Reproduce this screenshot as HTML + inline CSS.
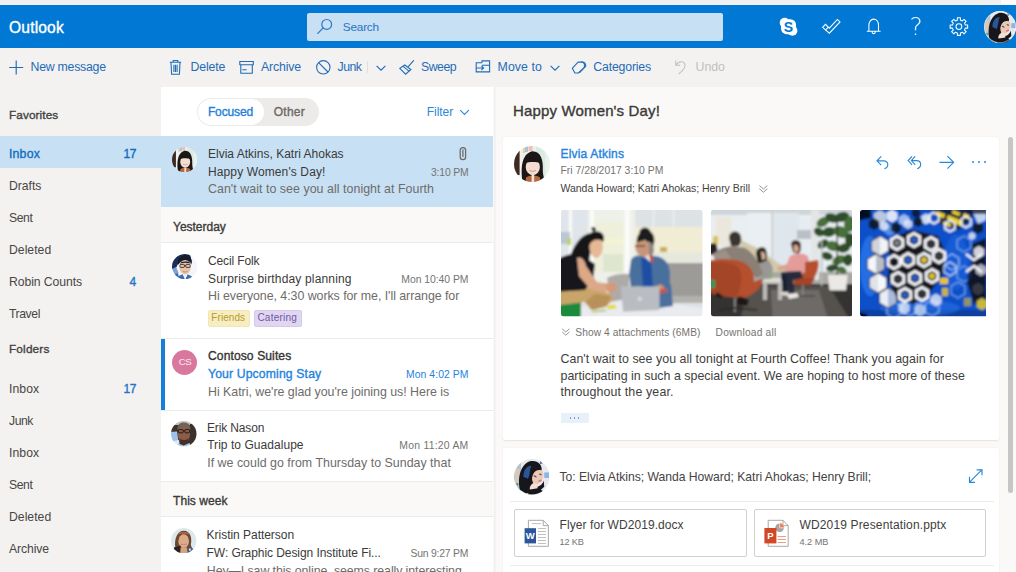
<!DOCTYPE html>
<html lang="en"><head><meta charset="utf-8"><title>Outlook</title>
<style>
html,body{margin:0;padding:0}
body{width:1016px;height:572px;overflow:hidden;position:relative;background:#faf9f8;font-family:'Liberation Sans',sans-serif}
.a{position:absolute;display:block}
.t{position:absolute;white-space:pre;line-height:16px;display:block}
</style></head>
<body>
<div class="a" style="left:0px;top:0px;width:1016px;height:5px;background:#f0f0f0"></div>
<div class="a" style="left:1001px;top:0px;width:15px;height:5px;background:#fbfbfb"></div>
<div class="a" style="left:0px;top:5px;width:1016px;height:42.6px;background:#0078d4"></div>
<span class="t" style="left:9.00px;top:19.50px;font-size:15.6px;-webkit-text-stroke:0.36px;color:#fff;letter-spacing:0.164px;">Outlook</span>
<div class="a" style="left:307px;top:12.5px;width:415.5px;height:28.3px;background:#c7e0f4;border-radius:2px"></div>
<svg class="a" style="left:316px;top:17px" width="18" height="18" viewBox="0 0 18 18"><circle cx="10.7" cy="7.4" r="4.9" fill="none" stroke="#2b78c5" stroke-width="1.2"/><path d="M7.2 10.9 L1.8 16.4" stroke="#2b78c5" stroke-width="1.3" stroke-linecap="round"/></svg>
<span class="t" style="left:342.80px;top:18.70px;font-size:11.8px;color:#2673c3;letter-spacing:-0.215px;">Search</span>
<div class="a" style="left:0px;top:48px;width:1016px;height:38.5px;background:#f3f2f1"></div>
<div class="a" style="left:0px;top:86.5px;width:160.8px;height:486px;background:#f3f2f1"></div>
<div class="a" style="left:160.8px;top:86.5px;width:332.7px;height:486px;background:#fff"></div>
<div class="a" style="left:493.5px;top:86.5px;width:522.5px;height:486px;background:#faf9f8"></div>
<div class="a" style="left:493.5px;top:86.5px;width:2.4px;height:486px;background:linear-gradient(90deg,#efeeec,#f7f6f5)"></div>
<svg class="a" style="left:8px;top:59px" width="17" height="17" viewBox="0 0 17 17"><path d="M8.2 1.5V15.5M1.2 8.5H15.2" stroke="#1f6cb8" stroke-width="1.15" fill="none"/></svg>
<span class="t" style="left:30.60px;top:59.00px;font-size:12.3px;color:#1f6cb8;letter-spacing:-0.247px;">New message</span>
<span class="t" style="left:190.60px;top:59.00px;font-size:12.3px;color:#1f6cb8;letter-spacing:-0.174px;">Delete</span>
<span class="t" style="left:261.00px;top:59.00px;font-size:12.3px;color:#1f6cb8;letter-spacing:-0.145px;">Archive</span>
<span class="t" style="left:337.50px;top:59.00px;font-size:12.3px;color:#1f6cb8;letter-spacing:-0.496px;">Junk</span>
<span class="t" style="left:421.00px;top:59.00px;font-size:12.3px;color:#1f6cb8;letter-spacing:-0.482px;">Sweep</span>
<span class="t" style="left:497.60px;top:59.00px;font-size:12.3px;color:#1f6cb8;letter-spacing:0.079px;">Move to</span>
<span class="t" style="left:593.30px;top:59.00px;font-size:12.3px;color:#1f6cb8;letter-spacing:-0.177px;">Categories</span>
<span class="t" style="left:695.60px;top:59.00px;font-size:12.3px;color:#c2c0be;letter-spacing:-0.027px;">Undo</span>
<div class="a" style="left:367.3px;top:60.5px;width:1px;height:12px;background:#e1dfdd"></div>
<span class="t" style="left:9.00px;top:107.00px;font-size:11.8px;-webkit-text-stroke:0.36px;color:#454341;letter-spacing:0.087px;">Favorites</span>
<div class="a" style="left:0px;top:136.3px;width:160.8px;height:31.9px;background:#c7e0f4"></div>
<span class="t" style="left:9.00px;top:146.00px;font-size:12.3px;-webkit-text-stroke:0.36px;color:#106ebe;letter-spacing:0.181px;">Inbox</span>
<span class="t" style="left:123.40px;top:146.00px;font-size:12px;-webkit-text-stroke:0.36px;color:#106ebe;letter-spacing:-0.380px;">17</span>
<span class="t" style="left:9.00px;top:178.00px;font-size:12.2px;color:#484644;letter-spacing:-0.036px;">Drafts</span>
<span class="t" style="left:9.00px;top:210.00px;font-size:12.2px;color:#484644;letter-spacing:-0.395px;">Sent</span>
<span class="t" style="left:9.00px;top:242.00px;font-size:12.2px;color:#484644;letter-spacing:0.026px;">Deleted</span>
<span class="t" style="left:9.00px;top:274.00px;font-size:12.2px;color:#484644;letter-spacing:-0.072px;">Robin Counts</span>
<span class="t" style="left:9.00px;top:305.80px;font-size:12.2px;color:#484644;letter-spacing:-0.404px;">Travel</span>
<span class="t" style="left:129.40px;top:274.00px;font-size:12px;-webkit-text-stroke:0.36px;color:#2474c8;">4</span>
<span class="t" style="left:9.00px;top:341.30px;font-size:11.8px;-webkit-text-stroke:0.36px;color:#454341;letter-spacing:0.165px;">Folders</span>
<span class="t" style="left:9.00px;top:381.00px;font-size:12.2px;color:#484644;letter-spacing:0.094px;">Inbox</span>
<span class="t" style="left:9.00px;top:412.60px;font-size:12.2px;color:#484644;letter-spacing:-0.438px;">Junk</span>
<span class="t" style="left:9.00px;top:445.00px;font-size:12.2px;color:#484644;letter-spacing:0.094px;">Inbox</span>
<span class="t" style="left:9.00px;top:477.00px;font-size:12.2px;color:#484644;letter-spacing:-0.395px;">Sent</span>
<span class="t" style="left:9.00px;top:509.00px;font-size:12.2px;color:#484644;letter-spacing:0.026px;">Deleted</span>
<span class="t" style="left:9.00px;top:541.00px;font-size:12.2px;color:#484644;letter-spacing:-0.092px;">Archive</span>
<span class="t" style="left:123.40px;top:381.00px;font-size:12px;-webkit-text-stroke:0.36px;color:#2474c8;letter-spacing:-0.380px;">17</span>
<div class="a" style="left:197.3px;top:97.7px;width:121.3px;height:28.2px;background:#edebe9;border-radius:15px"></div>
<div class="a" style="left:198px;top:98.5px;width:66.3px;height:26.6px;background:#fff;border-radius:14px"></div>
<span class="t" style="left:207.90px;top:104.20px;font-size:12px;-webkit-text-stroke:0.36px;color:#1f7fd8;letter-spacing:-0.119px;">Focused</span>
<span class="t" style="left:273.80px;top:104.20px;font-size:12px;-webkit-text-stroke:0.36px;color:#6b6967;letter-spacing:0.237px;">Other</span>
<span class="t" style="left:426.80px;top:104.00px;font-size:12px;color:#2b88d8;letter-spacing:-0.062px;">Filter</span>
<svg class="a" style="left:459px;top:108px" width="11" height="9" viewBox="0 0 11 9"><path d="M1.2 2.2 L5.5 6.4 L9.8 2.2" fill="none" stroke="#2b88d8" stroke-width="1.1"/></svg>
<div class="a" style="left:160.8px;top:136.3px;width:332.7px;height:70.4px;background:#c7e0f4"></div>
<span class="t" style="left:208.00px;top:145.80px;font-size:12px;color:#3b3a39;letter-spacing:0.007px;">Elvia Atkins, Katri Ahokas</span>
<span class="t" style="left:208.00px;top:163.50px;font-size:12px;color:#3b3a39;letter-spacing:0.114px;">Happy Women&#x27;s Day!</span>
<span class="t" style="left:208.00px;top:181.20px;font-size:12.4px;color:#6e6c6a;letter-spacing:0.043px;">Can&#x27;t wait to see you all tonight at Fourth</span>
<span class="t" style="left:431.00px;top:164.70px;font-size:10.4px;color:#757371;letter-spacing:-0.172px;">3:10 PM</span>
<div class="a" style="left:160.8px;top:206.7px;width:332.7px;height:36.2px;background:#faf9f8;border-bottom:1px solid #edebe9;box-sizing:border-box"></div>
<span class="t" style="left:173.00px;top:218.50px;font-size:12px;-webkit-text-stroke:0.36px;color:#3b3a39;letter-spacing:-0.015px;">Yesterday</span>
<span class="t" style="left:208.00px;top:252.60px;font-size:12px;color:#3b3a39;letter-spacing:-0.119px;">Cecil Folk</span>
<span class="t" style="left:208.00px;top:270.70px;font-size:12px;color:#3b3a39;letter-spacing:0.165px;">Surprise birthday planning</span>
<span class="t" style="left:401.30px;top:271.70px;font-size:10.4px;color:#757371;letter-spacing:-0.032px;">Mon 10:40 PM</span>
<span class="t" style="left:208.00px;top:287.80px;font-size:12.4px;color:#6e6c6a;letter-spacing:-0.051px;">Hi everyone, 4:30 works for me, I&#x27;ll arrange for</span>
<div class="a" style="left:207.5px;top:309.6px;width:42.2px;height:17.2px;background:#f7edc4;border:1px solid #f4e6b0;border-radius:2px;box-sizing:border-box"></div>
<span class="t" style="left:211.30px;top:310.30px;font-size:10px;color:#b89c1e;letter-spacing:0.077px;">Friends</span>
<div class="a" style="left:253.8px;top:309.8px;width:48.2px;height:17px;background:#e0d6f0;border:1px solid #d6c9ec;border-radius:2px;box-sizing:border-box"></div>
<span class="t" style="left:257.40px;top:310.30px;font-size:10px;color:#6f55a8;letter-spacing:0.248px;">Catering</span>
<div class="a" style="left:160.8px;top:338px;width:332.7px;height:1px;background:#edebe9"></div>
<div class="a" style="left:160.8px;top:338.6px;width:4.6px;height:71px;background:#1480da"></div>
<div class="a" style="left:172px;top:349.7px;width:25.3px;height:25.3px;background:#d9789f;border-radius:50%"></div>
<span class="t" style="left:178.70px;top:354.40px;font-size:9.7px;color:#fbeaf1;letter-spacing:-0.434px;">CS</span>
<span class="t" style="left:208.00px;top:348.40px;font-size:12.1px;-webkit-text-stroke:0.36px;color:#353433;letter-spacing:0.091px;">Contoso Suites</span>
<span class="t" style="left:208.00px;top:366.30px;font-size:12.2px;-webkit-text-stroke:0.36px;color:#2483dc;letter-spacing:0.147px;">Your Upcoming Stay</span>
<span class="t" style="left:406.00px;top:367.30px;font-size:10.4px;color:#2483dc;letter-spacing:0.064px;">Mon 4:02 PM</span>
<span class="t" style="left:208.00px;top:383.90px;font-size:12.4px;color:#6e6c6a;letter-spacing:-0.024px;">Hi Katri, we&#x27;re glad you&#x27;re joining us! Here is</span>
<div class="a" style="left:160.8px;top:409.5px;width:332.7px;height:1px;background:#edebe9"></div>
<span class="t" style="left:207.00px;top:419.50px;font-size:12px;color:#3b3a39;letter-spacing:-0.149px;">Erik Nason</span>
<span class="t" style="left:207.20px;top:437.30px;font-size:12px;color:#3b3a39;letter-spacing:0.046px;">Trip to Guadalupe</span>
<span class="t" style="left:399.30px;top:438.30px;font-size:10.4px;color:#757371;letter-spacing:0.247px;">Mon 11:20 AM</span>
<span class="t" style="left:207.20px;top:454.60px;font-size:12.4px;color:#6e6c6a;letter-spacing:0.018px;">If we could go from Thursday to Sunday that</span>
<div class="a" style="left:160.8px;top:480.6px;width:332.7px;height:36.7px;background:#faf9f8;border-bottom:1px solid #edebe9;border-top:1px solid #edebe9;box-sizing:border-box"></div>
<span class="t" style="left:173.00px;top:493.00px;font-size:12px;-webkit-text-stroke:0.36px;color:#3b3a39;letter-spacing:0.063px;">This week</span>
<span class="t" style="left:206.60px;top:526.80px;font-size:12px;color:#3b3a39;letter-spacing:-0.032px;">Kristin Patterson</span>
<span class="t" style="left:206.60px;top:544.80px;font-size:12px;color:#3b3a39;letter-spacing:-0.068px;">FW: Graphic Design Institute Fi...</span>
<span class="t" style="left:410.50px;top:545.80px;font-size:10.4px;color:#757371;letter-spacing:-0.216px;">Sun 9:27 PM</span>
<span class="t" style="left:206.80px;top:562.60px;font-size:12.4px;color:#6e6c6a;letter-spacing:-0.101px;">Hey—I saw this online, seems really interesting</span>
<span class="t" style="left:513.10px;top:102.60px;font-size:15px;-webkit-text-stroke:0.36px;color:#3b3a39;letter-spacing:0.144px;">Happy Women&#x27;s Day!</span>
<div class="a" style="left:503.3px;top:136.7px;width:495.7px;height:303px;background:#fff;border-radius:2px;box-shadow:0 0.3px 1.6px rgba(0,0,0,.09)"></div>
<span class="t" style="left:560.50px;top:145.50px;font-size:12px;-webkit-text-stroke:0.36px;color:#2483dc;letter-spacing:0.187px;">Elvia Atkins</span>
<span class="t" style="left:560.50px;top:162.80px;font-size:10.4px;color:#757371;">Fri 7/28/2017 3:10 PM</span>
<span class="t" style="left:560.50px;top:179.50px;font-size:10.5px;color:#454341;letter-spacing:-0.039px;">Wanda Howard; Katri Ahokas; Henry Brill</span>
<span class="t" style="left:575.30px;top:324.50px;font-size:10.2px;color:#757371;letter-spacing:0.101px;">Show 4 attachments (6MB)</span>
<span class="t" style="left:715.60px;top:324.50px;font-size:10.2px;color:#757371;letter-spacing:0.205px;">Download all</span>
<span class="t" style="left:560.50px;top:350.50px;font-size:12.4px;color:#403e3c;letter-spacing:0.046px;">Can&#x27;t wait to see you all tonight at Fourth Coffee! Thank you again for</span>
<span class="t" style="left:560.50px;top:367.80px;font-size:12.4px;color:#403e3c;letter-spacing:0.022px;">participating in such a special event. We are hoping to host more of these</span>
<span class="t" style="left:560.50px;top:384.10px;font-size:12.4px;color:#403e3c;letter-spacing:0.143px;">throughout the year.</span>
<div class="a" style="left:560.6px;top:412.5px;width:28px;height:10.2px;background:#e8f1fa;border-radius:1px"></div>
<div class="a" style="left:569.6px;top:417.2px;width:1.4px;height:1.4px;background:#6d8db0;border-radius:50%"></div>
<div class="a" style="left:573.8px;top:417.2px;width:1.4px;height:1.4px;background:#6d8db0;border-radius:50%"></div>
<div class="a" style="left:578px;top:417.2px;width:1.4px;height:1.4px;background:#6d8db0;border-radius:50%"></div>
<div class="a" style="left:503.3px;top:448px;width:495.7px;height:130px;background:#fff;border-radius:2px;box-shadow:0 0.3px 1.6px rgba(0,0,0,.09)"></div>
<span class="t" style="left:559.50px;top:469.40px;font-size:12.2px;color:#454341;letter-spacing:-0.040px;">To: Elvia Atkins; Wanda Howard; Katri Ahokas; Henry Brill;</span>
<div class="a" style="left:510px;top:501px;width:483.8px;height:1px;background:#edebe9"></div>
<div class="a" style="left:514px;top:508.9px;width:232.8px;height:47.8px;border:1px solid #d2d0ce;border-radius:2px;box-sizing:border-box;background:#fff"></div>
<div class="a" style="left:753.6px;top:508.9px;width:232.3px;height:47.8px;border:1px solid #d2d0ce;border-radius:2px;box-sizing:border-box;background:#fff"></div>
<span class="t" style="left:559.60px;top:516.50px;font-size:12px;color:#403e3c;letter-spacing:0.066px;">Flyer for WD2019.docx</span>
<span class="t" style="left:559.60px;top:533.60px;font-size:9.2px;color:#757371;letter-spacing:-0.166px;">12 KB</span>
<span class="t" style="left:799.50px;top:516.50px;font-size:12px;color:#403e3c;letter-spacing:0.149px;">WD2019 Presentation.pptx</span>
<span class="t" style="left:799.50px;top:533.60px;font-size:9.2px;color:#757371;letter-spacing:-0.035px;">4.2 MB</span>
<div class="a" style="left:510px;top:564.9px;width:483.5px;height:1px;background:#edebe9"></div>
<div class="a" style="left:1008px;top:136.5px;width:5px;height:356px;background:#c8c6c4;border-radius:3px"></div>
<svg class="a" style="left:168px;top:58px" width="16" height="18" viewBox="0 0 16 18" ><g fill="none" stroke="#1f6cb8" stroke-width="1.1"><path d="M1.8 4.3H13.2M5.2 4.1V2.5H9.8V4.1M3 4.5L3.6 16.2H11.4L12 4.5M5.9 6.8V14M7.5 6.8V14M9.1 6.8V14"/></g></svg>
<svg class="a" style="left:238px;top:59px" width="18" height="17" viewBox="0 0 18 17" ><g fill="none" stroke="#1f6cb8" stroke-width="1.1"><path d="M1.8 2.5H15.3V5.8H1.8ZM2.8 5.8V14.2H14.3V5.8M4.3 10.8H8.6" /></g></svg>
<svg class="a" style="left:315px;top:59px" width="17" height="17" viewBox="0 0 17 17" ><g fill="none" stroke="#1f6cb8" stroke-width="1.1"><circle cx="8.3" cy="8.3" r="6.7"/><path d="M3.6 3.6L13 13"/></g></svg>
<svg class="a" style="left:375px;top:63px" width="12" height="10" viewBox="0 0 12 10" ><path d="M1.6 2.8L6 7.2L10.4 2.8" fill="none" stroke="#1f6cb8" stroke-width="1.1"/></svg>
<svg class="a" style="left:548.5px;top:63px" width="12" height="10" viewBox="0 0 12 10" ><path d="M1.6 2.8L6 7.2L10.4 2.8" fill="none" stroke="#1f6cb8" stroke-width="1.1"/></svg>
<svg class="a" style="left:398px;top:58px" width="18" height="18" viewBox="0 0 18 18" ><g fill="none" stroke="#1f6cb8" stroke-width="1.1"><path d="M15.8 2.4L9.8 9.2M6.8 7L12.9 11.5L7.6 16.2L1.8 10.3ZM4.9 8.2L10.9 13.2"/></g></svg>
<svg class="a" style="left:474px;top:58px" width="18" height="16" viewBox="0 0 18 16" ><g fill="none" stroke="#1f6cb8" stroke-width="1.1"><path d="M8 4.8V2.9H15.6V13.9H2.2V4.8H8M8 7.2H15.6M2.2 10H9.6M7.4 7.9L9.6 10L7.4 12.1"/></g></svg>
<svg class="a" style="left:570px;top:59px" width="18" height="16" viewBox="0 0 18 16" ><g fill="none" stroke="#1f6cb8" stroke-width="1.1" stroke-linejoin="round"><path d="M2.3 9.3L8 3.1H12.6L14.4 4.9V8.4L8.4 14H4.9Z"/><path d="M11 3.2Q15.6 2.2 15.8 7.2L9.6 13.6"/></g></svg>
<svg class="a" style="left:674px;top:58px" width="14" height="18" viewBox="0 0 14 18" ><g fill="none" stroke="#c2c0be" stroke-width="1.1"><path d="M1.8 2.6V7.2H6.2M2 7C4 3.6 8.6 2.6 10.6 5.4C12.6 8.6 9 12.6 4.6 16"/></g></svg>
<svg class="a" style="left:778px;top:16px" width="21" height="21" viewBox="0 0 21 21" ><g fill="#fff"><rect x="3" y="3.2" width="15" height="15" rx="5.6"/><circle cx="6.7" cy="6.8" r="5"/><circle cx="14.4" cy="14.8" r="5"/></g><text x="10.5" y="15.6" text-anchor="middle" font-family="Liberation Sans, sans-serif" font-weight="700" font-size="14" fill="#0078d4">S</text></svg>
<svg class="a" style="left:821px;top:17px" width="21" height="18" viewBox="0 0 21 18" ><g fill="none" stroke="#fff" stroke-width="1.05" stroke-linejoin="miter"><path d="M1.6 10.3L4.5 7.3L8.3 11.2L16.4 2.4L19 4.9L8.3 16.2Z"/><path d="M4.5 13.2L7.3 10.2"/></g></svg>
<svg class="a" style="left:865px;top:17px" width="18" height="19" viewBox="0 0 18 19" ><g fill="none" stroke="#fff" stroke-width="1.05"><path d="M3.9 14.3V8.2C3.9 4.6 6 2.1 8.7 2.1C11.4 2.1 13.5 4.6 13.5 8.2V14.3M1.8 14.3H15.6M7 14.5C7 17.3 10.4 17.3 10.4 14.5"/></g></svg>
<span class="a" style="left:909.6px;top:13.4px;font-family:'DejaVu Sans','Liberation Sans',sans-serif;font-weight:200;font-size:25px;line-height:28px;color:#fff;opacity:.92">?</span>
<svg class="a" style="left:948px;top:16px" width="22" height="22" viewBox="0 0 22 22" ><g fill="none" stroke="#fff" stroke-width="1.05" stroke-linejoin="round"><path d="M19.67 9.07L19.67 12.13L17.32 12.14L16.53 14.05L18.18 15.72L16.02 17.88L14.35 16.23L12.44 17.02L12.43 19.37L9.37 19.37L9.36 17.02L7.45 16.23L5.78 17.88L3.62 15.72L5.27 14.05L4.48 12.14L2.13 12.13L2.13 9.07L4.48 9.06L5.27 7.15L3.62 5.48L5.78 3.32L7.45 4.97L9.36 4.18L9.37 1.83L12.43 1.83L12.44 4.18L14.35 4.97L16.02 3.32L18.18 5.48L16.53 7.15L17.32 9.06Z"/><circle cx="10.9" cy="10.6" r="2.9"/></g></svg>
<svg class="a" style="left:458px;top:146px" width="10" height="15" viewBox="0 0 10 15" ><g fill="none" stroke="#6b6967" stroke-width="1.25"><path d="M2.2 9.5V4.2C2.2 0.6 7.6 0.6 7.6 4.2V11C7.6 14.6 2.2 14.6 2.2 11V9.5M4.9 3.6V11"/></g></svg>
<svg class="a" style="left:875px;top:154px" width="16" height="17" viewBox="0 0 16 17" ><g fill="none" stroke="#2b88d8" stroke-width="1.15"><path d="M6.2 2.4L2 6.8L6.2 11.2M2.2 6.8H8.6C13.6 6.8 14.4 13 9.4 14.8"/></g></svg>
<svg class="a" style="left:906px;top:154px" width="18" height="17" viewBox="0 0 18 17" ><g fill="none" stroke="#2b88d8" stroke-width="1.15"><path d="M6 2.4L2.2 6.6L6 10.8M9.2 2.4L5.4 6.6L9.2 10.8M5.6 6.6H10.6C15.6 6.6 16.2 13 11.2 14.8"/></g></svg>
<svg class="a" style="left:938px;top:154px" width="18" height="17" viewBox="0 0 18 17" ><g fill="none" stroke="#2b88d8" stroke-width="1.15"><path d="M1.4 8.3H15.4M9.4 2.2L15.6 8.3L9.4 14.6"/></g></svg>
<div class="a" style="left:972.2px;top:161.4px;width:2px;height:2px;background:#2b88d8;border-radius:50%"></div>
<div class="a" style="left:977.9px;top:161.4px;width:2px;height:2px;background:#2b88d8;border-radius:50%"></div>
<div class="a" style="left:983.5px;top:161.4px;width:2px;height:2px;background:#2b88d8;border-radius:50%"></div>
<svg class="a" style="left:968px;top:468px" width="16" height="16" viewBox="0 0 16 16" ><g fill="none" stroke="#2b88d8" stroke-width="1.15"><path d="M1.6 14.2L13.8 1.9M8.6 1.8H14V7.2M1.5 8.8V14.3H7"/></g></svg>
<svg class="a" style="left:757.6px;top:183.6px" width="11" height="10" viewBox="0 0 11 10" ><g fill="none" stroke="#8a8886" stroke-width="0.9"><path d="M1.4 1.6L5.4 5L9.4 1.6M1.4 4.8L5.4 8.2L9.4 4.8"/></g></svg>
<svg class="a" style="left:560.5px;top:327px" width="10" height="10" viewBox="0 0 10 10" ><g fill="none" stroke="#8a8886" stroke-width="0.9"><path d="M1.2 1.8L4.8 5L8.4 1.8M1.2 5L4.8 8.2L8.4 5"/></g></svg>
<svg class="a" style="left:524px;top:519px" width="26" height="29" viewBox="0 0 26 29" ><path d="M4.4 1.3H19.2L24.4 6.6V27.3H4.4Z" fill="#fff" stroke="#a19f9d" stroke-width="0.9"/><path d="M19.2 1.3V6.6H24.4" fill="none" stroke="#a19f9d" stroke-width="0.9"/>
<g stroke="#b3b0ad" stroke-width="0.8"><path d="M8 4.6H17M14 9.5H22M14 12.5H22M14 15.5H22M14 18.5H22M14 21.5H22M14 24.5H22"/></g>
<rect x="0.6" y="9.2" width="11.4" height="15.2" fill="#2b579a"/><text x="6.3" y="20.4" text-anchor="middle" font-family="Liberation Sans, sans-serif" font-weight="700" font-size="9.5" fill="#fff">W</text></svg>
<svg class="a" style="left:763.5px;top:519px" width="26" height="29" viewBox="0 0 26 29" ><path d="M4.2 1.3H19L24.2 6.6V27.3H4.2Z" fill="#fff" stroke="#a19f9d" stroke-width="0.9"/><path d="M19 1.3V6.6H24.2" fill="none" stroke="#a19f9d" stroke-width="0.9"/>
<circle cx="15.6" cy="8.8" r="4.3" fill="#a6a4a2"/><path d="M15.6 8.8V3.8A5 5 0 0 1 20.6 8.8Z" fill="#e8825f" stroke="#fff" stroke-width="0.6"/>
<g stroke="#e9967a" stroke-width="0.9"><path d="M13.6 17.5H22M13.6 20.5H22M13.6 23.5H22"/></g>
<rect x="0.4" y="9" width="12" height="15.4" fill="#d24726"/><text x="6.4" y="20.3" text-anchor="middle" font-family="Liberation Sans, sans-serif" font-weight="700" font-size="9.5" fill="#fff">P</text></svg>
<svg class="a" style="left:513.5px;top:146.1px" width="36" height="36" viewBox="0 0 36 36"><defs><clipPath id="c1"><circle cx="18.0" cy="18.0" r="18.0"/></clipPath><filter id="f1" x="-10%" y="-10%" width="120%" height="120%"><feGaussianBlur stdDeviation="0.5"/></filter></defs><g clip-path="url(#c1)"><g filter="url(#f1)"><rect x="-2" y="-2" width="40" height="40" fill="#eaf1ec"/>
<rect x="22" y="-2" width="9" height="40" fill="#dcebe2"/>
<rect x="8" y="-2" width="3" height="9" fill="#e8d48a"/><rect x="11" y="-2" width="3" height="8" fill="#a9bfe4"/><rect x="14.5" y="-2" width="4" height="7" fill="#f2bdb4"/>
<rect x="-2" y="3" width="8.5" height="26" fill="#3c2a22"/><rect x="5.6" y="2" width="3.2" height="30" fill="#f4f1ec"/>
<path d="M8.6 36C6.6 22 7.6 8.5 17.4 5.4C26.6 4.6 29.4 14 28.8 24C28.7 28 29.8 31 30.6 34L30 38H8Z" fill="#1b1615"/>
<ellipse cx="18.8" cy="21" rx="7.1" ry="8.3" fill="#f3ddd0"/>
<path d="M10.6 17.4C11 10 26 9 26.6 17.2C22 15.6 15 15.8 10.6 17.4Z" fill="#1b1615"/>
<path d="M15.4 24.4Q18.8 26.6 22 24.4" stroke="#c98e80" stroke-width="0.9" fill="none"/>
<path d="M12 31.5C15 28.8 23 28.8 26 31.5L27 38H11Z" fill="#b4673c"/>
<rect x="17.6" y="29" width="2.6" height="8" fill="#f0e4da"/></g></g></svg>
<svg class="a" style="left:171.7px;top:147.1px" width="25.3" height="25.3" viewBox="0 0 36 36"><defs><clipPath id="c2"><circle cx="18.0" cy="18.0" r="18.0"/></clipPath><filter id="f2" x="-10%" y="-10%" width="120%" height="120%"><feGaussianBlur stdDeviation="0.7"/></filter></defs><g clip-path="url(#c2)"><g filter="url(#f2)"><rect x="-2" y="-2" width="40" height="40" fill="#eaf1ec"/>
<rect x="22" y="-2" width="9" height="40" fill="#dcebe2"/>
<rect x="8" y="-2" width="3" height="9" fill="#e8d48a"/><rect x="11" y="-2" width="3" height="8" fill="#a9bfe4"/><rect x="14.5" y="-2" width="4" height="7" fill="#f2bdb4"/>
<rect x="-2" y="3" width="8.5" height="26" fill="#3c2a22"/><rect x="5.6" y="2" width="3.2" height="30" fill="#f4f1ec"/>
<path d="M8.6 36C6.6 22 7.6 8.5 17.4 5.4C26.6 4.6 29.4 14 28.8 24C28.7 28 29.8 31 30.6 34L30 38H8Z" fill="#1b1615"/>
<ellipse cx="18.8" cy="21" rx="7.1" ry="8.3" fill="#f3ddd0"/>
<path d="M10.6 17.4C11 10 26 9 26.6 17.2C22 15.6 15 15.8 10.6 17.4Z" fill="#1b1615"/>
<path d="M15.4 24.4Q18.8 26.6 22 24.4" stroke="#c98e80" stroke-width="0.9" fill="none"/>
<path d="M12 31.5C15 28.8 23 28.8 26 31.5L27 38H11Z" fill="#b4673c"/>
<rect x="17.6" y="29" width="2.6" height="8" fill="#f0e4da"/></g></g></svg>
<svg class="a" style="left:171.7px;top:253.8px" width="25.3" height="25.3" viewBox="0 0 25.3 25.3"><defs><clipPath id="c3"><circle cx="12.65" cy="12.65" r="12.65"/></clipPath><filter id="f3" x="-10%" y="-10%" width="120%" height="120%"><feGaussianBlur stdDeviation="0.5"/></filter></defs><g clip-path="url(#c3)"><g filter="url(#f3)"><rect x="-2" y="-2" width="30" height="30" fill="#f4f6fa"/>
<path d="M-2 14C0 4 8 -2 18 0L20 9L12 4L6 10L3 16Z" fill="#1d2f57"/>
<path d="M0 15L4 13L6.6 19L3 21Z" fill="#7ea0d8"/><path d="M2 21L6 19L7 24L4 25Z" fill="#3d68b0"/>
<path d="M6 11C5 3.4 10 0.8 13.8 1C18.6 1.2 20.6 5.4 19.4 10.8L18 7.8L8.4 7.8Z" fill="#151c2e"/>
<ellipse cx="13.1" cy="13.2" rx="5.7" ry="7.3" fill="#e9c4a6"/>
<path d="M7.4 9.6C9 7 17 6.8 18.8 9.4C15 8.4 11 8.4 7.4 9.6Z" fill="#151c2e"/>
<g fill="none" stroke="#2e2a2e" stroke-width="0.9"><rect x="8" y="10.4" width="4.4" height="3" rx="0.8"/><rect x="13.8" y="10.4" width="4.4" height="3" rx="0.8"/><path d="M12.4 11.6H13.8"/></g>
<path d="M10.8 17.4Q13.1 18.8 15.4 17.4" stroke="#b5756a" stroke-width="0.7" fill="none"/>
<path d="M5 27L7 21.8L10.8 20.2L13.1 24.4L15.6 20.2L20 22.6L21.4 27Z" fill="#3b6cb4"/>
<path d="M10.8 20.2L13.1 26L15.6 20.2L13.1 21.6Z" fill="#f4f6fa"/></g></g></svg>
<svg class="a" style="left:171.2px;top:421.4px" width="25.5" height="25.5" viewBox="0 0 25.5 25.5"><defs><clipPath id="c4"><circle cx="12.75" cy="12.75" r="12.75"/></clipPath><filter id="f4" x="-10%" y="-10%" width="120%" height="120%"><feGaussianBlur stdDeviation="0.6"/></filter></defs><g clip-path="url(#c4)"><g filter="url(#f4)"><rect x="-2" y="-2" width="30" height="30" fill="#40302a"/>
<rect x="3" y="-2" width="18" height="6" fill="#c9bdb0"/>
<rect x="19" y="3" width="9" height="22" fill="#3a302e"/>
<path d="M-2 11L6 10.4L7.6 21L-2 22Z" fill="#9fc2ea"/>
<path d="M-2 21L8 19L9 27H-2Z" fill="#dfe9f4"/>
<path d="M6.4 9C6 3.4 10 1.6 13 1.6C17.6 1.8 19.6 4.4 19.4 9L13 6.4Z" fill="#6b635e"/>
<ellipse cx="12.9" cy="12.8" rx="6.2" ry="7.9" fill="#8b5d46"/>
<g fill="none" stroke="#241c1a" stroke-width="1"><rect x="7.4" y="8.6" width="4.8" height="3.2" rx="0.9"/><rect x="13.8" y="8.6" width="4.8" height="3.2" rx="0.9"/><path d="M12.2 9.8H13.8"/></g>
<path d="M9 17.4Q13 20.4 17 17.4L16 21.4H10Z" fill="#4a2e26"/>
<path d="M5 27L7 22.4L12.8 24.4L18.4 22L21 27Z" fill="#b4cbe4"/></g></g></svg>
<svg class="a" style="left:171.4px;top:527.7px" width="25.4" height="25.4" viewBox="0 0 25.4 25.4"><defs><clipPath id="c5"><circle cx="12.7" cy="12.7" r="12.7"/></clipPath><filter id="f5" x="-10%" y="-10%" width="120%" height="120%"><feGaussianBlur stdDeviation="0.6"/></filter></defs><g clip-path="url(#c5)"><g filter="url(#f5)"><rect x="-2" y="-2" width="30" height="30" fill="#dde8ec"/>
<path d="M4.4 20C2.8 10 7 2.6 13 2.8C18.8 3 21.6 9 19.8 17L21.6 21.6L17 23H6Z" fill="#6e4630"/>
<path d="M6.6 6.4C9 3.4 16.6 3.2 18.8 6.6C15 5.4 10 5.4 6.6 6.4Z" fill="#a86a4a"/>
<ellipse cx="12.7" cy="13.2" rx="5.3" ry="6.9" fill="#dcaa86"/>
<path d="M10 16.2Q12.8 18.6 15.6 16.2Q12.8 17.2 10 16.2Z" fill="#fff" stroke="#b86a5a" stroke-width="0.5"/>
<path d="M2 27L3 19.6L9.6 17.6L10.6 27Z" fill="#2a2420"/>
<path d="M9.6 19.6H16L17.4 27H9Z" fill="#d7a27e"/>
<path d="M16 19L22 20.6L23 27H16.6Z" fill="#4c5d7e"/><rect x="18" y="20.6" width="1.8" height="2" fill="#e8ecf2"/><rect x="20.4" y="23" width="1.8" height="2" fill="#c9463c"/></g></g></svg>
<svg class="a" style="left:513.5px;top:459px" width="35.6" height="35.6" viewBox="0 0 36 36"><defs><clipPath id="c6"><circle cx="18.0" cy="18.0" r="18.0"/></clipPath><filter id="f6" x="-10%" y="-10%" width="120%" height="120%"><feGaussianBlur stdDeviation="0.5"/></filter></defs><g clip-path="url(#c6)"><g filter="url(#f6)"><rect x="-2" y="-2" width="40" height="40" fill="#e6eaee"/>
<rect x="-2" y="-2" width="9" height="40" fill="#b4c2d0"/>
<rect x="1" y="10" width="5" height="14" fill="#d9c8bc"/>
<rect x="30.6" y="13.6" width="5" height="5.6" fill="#8db4e4"/>
<path d="M26.4 1.6L29 4.4L26 5.6Z" fill="#5a6ea8"/>
<circle cx="3.4" cy="25.6" r="1" fill="#2a9a4a"/>
<path d="M6 31C3.6 20 6 6 16 2.4C24 0.6 28.6 6 28 11.4L22 14L19 24L24 28C27 27 29 25 30 22L30.6 28L25 33L12 35Z" fill="#15171d"/>
<path d="M9.4 18C9.6 11 13 6.6 17.6 6.8C15.6 11 16.6 15 14.2 20Z" fill="#2a5596"/>
<ellipse cx="24" cy="18" rx="5.3" ry="7.9" transform="rotate(22 24 18)" fill="#efc8b2"/>
<path d="M19 11C21 8.4 25.4 8 27.6 11.4C24.6 10.6 21.6 11.4 19.6 13.6Z" fill="#15171d"/>
<ellipse cx="21.4" cy="17.6" rx="1.7" ry="0.8" transform="rotate(28 21.4 17.6)" fill="#3c5a92"/>
<ellipse cx="26.6" cy="15.6" rx="1.5" ry="0.7" transform="rotate(20 26.6 15.6)" fill="#3c5a92"/>
<ellipse cx="26.4" cy="22" rx="1.9" ry="1" transform="rotate(-18 26.4 22)" fill="#e17a92"/>
<path d="M16 31C15.6 27 18.6 23.6 21.6 24.4C24 25 24.4 28.6 23.4 32Z" fill="#f5dfd0"/>
<path d="M14 38L15 31L24 29.6L29 32L30 38Z" fill="#15161a"/></g></g></svg>
<svg class="a" style="left:984.3px;top:10.7px" width="32.2" height="32.2" viewBox="0 0 36 36"><defs><clipPath id="c7"><circle cx="18.0" cy="18.0" r="18.0"/></clipPath><filter id="f7" x="-10%" y="-10%" width="120%" height="120%"><feGaussianBlur stdDeviation="0.6"/></filter></defs><g clip-path="url(#c7)"><g filter="url(#f7)"><rect x="-2" y="-2" width="40" height="40" fill="#e6eaee"/>
<rect x="-2" y="-2" width="9" height="40" fill="#b4c2d0"/>
<rect x="1" y="10" width="5" height="14" fill="#d9c8bc"/>
<rect x="30.6" y="13.6" width="5" height="5.6" fill="#8db4e4"/>
<path d="M26.4 1.6L29 4.4L26 5.6Z" fill="#5a6ea8"/>
<circle cx="3.4" cy="25.6" r="1" fill="#2a9a4a"/>
<path d="M6 31C3.6 20 6 6 16 2.4C24 0.6 28.6 6 28 11.4L22 14L19 24L24 28C27 27 29 25 30 22L30.6 28L25 33L12 35Z" fill="#15171d"/>
<path d="M9.4 18C9.6 11 13 6.6 17.6 6.8C15.6 11 16.6 15 14.2 20Z" fill="#2a5596"/>
<ellipse cx="24" cy="18" rx="5.3" ry="7.9" transform="rotate(22 24 18)" fill="#efc8b2"/>
<path d="M19 11C21 8.4 25.4 8 27.6 11.4C24.6 10.6 21.6 11.4 19.6 13.6Z" fill="#15171d"/>
<ellipse cx="21.4" cy="17.6" rx="1.7" ry="0.8" transform="rotate(28 21.4 17.6)" fill="#3c5a92"/>
<ellipse cx="26.6" cy="15.6" rx="1.5" ry="0.7" transform="rotate(20 26.6 15.6)" fill="#3c5a92"/>
<ellipse cx="26.4" cy="22" rx="1.9" ry="1" transform="rotate(-18 26.4 22)" fill="#e17a92"/>
<path d="M16 31C15.6 27 18.6 23.6 21.6 24.4C24 25 24.4 28.6 23.4 32Z" fill="#f5dfd0"/>
<path d="M14 38L15 31L24 29.6L29 32L30 38Z" fill="#15161a"/></g></g></svg>
<div class="a" style="left:984.3px;top:10.7px;width:32.2px;height:32.2px;border-radius:50%;box-shadow:0 0 0 0.7px rgba(255,255,255,.55) inset"></div>
<svg class="a" style="left:561.3px;top:210.3px" width="141.5" height="106.3" viewBox="0 0 141.5 106.3"><defs><clipPath id="c8"><rect x="0" y="0" width="141.5" height="106.3" rx="2.5"/></clipPath><filter id="f8" x="-8%" y="-10%" width="116%" height="120%"><feGaussianBlur stdDeviation="0.95"/></filter></defs><g clip-path="url(#c8)"><g filter="url(#f8)"><rect x="-9" y="-9" width="162" height="127" fill="#eef0ea"/>
<rect x="-9" y="-9" width="36" height="66" fill="#dfe5ea"/>
<rect x="8" y="-6" width="3" height="56" fill="#fbfbf9"/><rect x="29" y="-6" width="4" height="66" fill="#fbfbf9"/>
<rect x="-6" y="22" width="15" height="12" fill="#b9c6d6"/>
<rect x="33" y="12" width="30" height="50" fill="#eef0dc"/>
<rect x="40" y="28" width="22" height="6" fill="#f4f3d4"/><rect x="42" y="44" width="20" height="18" fill="#dfe6cf"/>
<rect x="63.5" y="-6" width="5.5" height="72" fill="#fafaf8"/>
<rect x="74" y="-9" width="80" height="27" fill="#dde2e5"/>
<rect x="74" y="17" width="80" height="37" fill="#f1ecd4"/>
<rect x="92" y="-6" width="1" height="23" fill="#f6f6f4"/><rect x="112" y="-6" width="1" height="23" fill="#f6f6f4"/>
<rect x="99" y="37" width="7" height="6" fill="#c9b04a"/>
<rect x="74" y="42" width="80" height="12" fill="#e6e8de"/>
<rect x="6" y="28" width="4" height="7" fill="#b9d35a"/>
<path d="M46 68Q56 63 68 64V92H50Z" fill="#aeaba7"/>
<path d="M106 53H152V100H108Z" fill="#9d9b98"/>
<path d="M110 86H152V99L112 96Z" fill="#b3b1ae"/>
<path d="M-9 93H152V116H-9Z" fill="#dfe2e5"/>
<path d="M14 98L60 90L100 92L152 100V116H14Z" fill="#e9ebee"/>
<path d="M-8 92H20V116H-8Z" fill="#1a8a3c"/>
<path d="M-8 80C8 76 28 76 36 80C46 82 52 84 52 90L44 97L30 100L24 92L-8 96Z" fill="#c9a56a"/>
<path d="M24 92L34 84L50 86L46 96L32 100Z" fill="#b8915a"/>
<path d="M8 60C6 46 16 28 26 24L34 22L40 26L36 34L30 40L26 62L14 70Z" fill="#191615"/>
<path d="M-8 52C4 44 14 42 22 46L34 54L32 70L24 80L-8 82Z" fill="#17171a"/>
<path d="M28 32C30 28 38 28 41 32C43 38 41 46 36 48C31 48 28 42 28 32Z" fill="#e6b896"/>
<path d="M25 34C24 24 32 19 39 22C43 24 44 28 42 32C38 28 32 29 29 34L27 40Z" fill="#191615"/>
<path d="M30 18C32 16 35 17 35 20L32 22Z" fill="#191615"/>
<path d="M16 48C20 46 24 50 25 56L36 72L50 74L52 80L44 82L30 80L18 66Z" fill="#dca888"/>
<path d="M44 74L54 72L56 80L48 84Z" fill="#d39a7c"/>
<path d="M76 34C74 24 82 19 88 21C94 23 95 32 91 38L84 30Z" fill="#1c1a1c"/>
<circle cx="84" cy="23" r="5.6" fill="#1c1a1c"/>
<path d="M74 36C75 31 82 30 88 32C91 38 90 44 86 47C80 48 75 44 74 36Z" fill="#c99578"/>
<path d="M74 36H84" stroke="#2a2426" stroke-width="1"/>
<path d="M88 32C92 32 94 38 92 44L88 46Z" fill="#8a8684"/>
<path d="M70 50C72 45 80 44 84 48L92 46C102 46 108 52 109 62L109 78L98 82L70 80L68 64Z" fill="#4a6f9c"/>
<path d="M80 48L90 47L92 78H82Z" fill="#1d4fa4"/>
<path d="M84 47L88 44L91 47L89 52Z" fill="#e8e4e2"/><path d="M88 44L92 45L92 52L90 54Z" fill="#c4463a"/>
<path d="M96 76L110 74L112 96L98 98Z" fill="#4c6f9e"/>
<path d="M68 78L78 76L80 82L70 84Z" fill="#c99578"/><path d="M90 78L100 74L104 78L94 84Z" fill="#c99578"/>
<path d="M96 80L106 78L106 82L98 84Z" fill="#c8563e"/>
<path d="M60 76.5H98.5V100L62 101.7Z" fill="#b9bdc2"/>
<rect x="77" y="87" width="3.6" height="3.6" fill="#d9dcdf"/>
<path d="M45.5 95.5L54 94.5L55.5 98.5L47 99.6Z" fill="#e6d944"/>
<path d="M30 101L44 99.6L46 101L32 102.6Z" fill="#a9c95c"/></g></g></svg>
<svg class="a" style="left:710.8px;top:210.3px" width="141.5" height="106.3" viewBox="0 0 141.5 106.3"><defs><clipPath id="c9"><rect x="0" y="0" width="141.5" height="106.3" rx="2.5"/></clipPath><filter id="f9" x="-8%" y="-10%" width="116%" height="120%"><feGaussianBlur stdDeviation="0.95"/></filter></defs><g clip-path="url(#c9)"><g filter="url(#f9)"><rect x="-9" y="-9" width="162" height="127" fill="#e9eef1"/>
<rect x="-9" y="-9" width="162" height="14" fill="#cfd6da"/>
<rect x="36" y="3" width="26" height="57" fill="#e9eff3"/><rect x="62" y="3" width="26" height="57" fill="#dfe7ec"/>
<rect x="88" y="8" width="22" height="55" fill="#e6ecf2"/>
<rect x="60.5" y="0" width="1.6" height="62" fill="#c9cbc8"/>
<rect x="86" y="20" width="18" height="9" fill="#b9c0c6"/>
<rect x="4.6" y="7" width="15.6" height="29" fill="#ebe7dc"/><rect x="2" y="26" width="5" height="8" fill="#d9c24e"/>
<path d="M30 30L46 38L80 62H52L30 42Z" fill="#d2c9ac"/>
<rect x="-9" y="72" width="162" height="46" fill="#353331"/>
<path d="M36 76H118L144 118H28Z" fill="#54514e"/>
<path d="M60 80H108L120 118H62Z" fill="#6d6a67"/>
<rect x="-9" y="62" width="162" height="12" fill="#a9a8a6"/>
<rect x="100" y="0" width="8" height="70" fill="#e4e6e6"/>
<ellipse cx="112" cy="12" rx="7" ry="4.5" transform="rotate(-30 112 12)" fill="#466f3a"/><ellipse cx="121" cy="8" rx="7" ry="4.5" transform="rotate(20 121 8)" fill="#2f4d2c"/><ellipse cx="131" cy="7" rx="7.5" ry="5" transform="rotate(-15 131 7)" fill="#2f4d2c"/><ellipse cx="139" cy="14" rx="6" ry="8" transform="rotate(10 139 14)" fill="#466f3a"/><ellipse cx="108" cy="22" rx="5.5" ry="4" transform="rotate(30 108 22)" fill="#2f4d2c"/><ellipse cx="118" cy="22" rx="7" ry="5" transform="rotate(-10 118 22)" fill="#2f4d2c"/><ellipse cx="130" cy="22" rx="8" ry="5.5" transform="rotate(25 130 22)" fill="#466f3a"/><ellipse cx="139" cy="30" rx="5" ry="7" transform="rotate(0 139 30)" fill="#2f4d2c"/><ellipse cx="112" cy="34" rx="6" ry="4" transform="rotate(-35 112 34)" fill="#2f4d2c"/><ellipse cx="122" cy="36" rx="7" ry="5" transform="rotate(15 122 36)" fill="#466f3a"/><ellipse cx="133" cy="38" rx="6.5" ry="4.5" transform="rotate(-20 133 38)" fill="#2f4d2c"/><ellipse cx="116" cy="46" rx="6" ry="4" transform="rotate(20 116 46)" fill="#2f4d2c"/><ellipse cx="128" cy="50" rx="7" ry="4.5" transform="rotate(-25 128 50)" fill="#466f3a"/><ellipse cx="137" cy="50" rx="5" ry="6" transform="rotate(10 137 50)" fill="#2f4d2c"/><ellipse cx="121" cy="58" rx="6" ry="3.6" transform="rotate(-10 121 58)" fill="#2f4d2c"/><ellipse cx="131" cy="60" rx="5" ry="3.4" transform="rotate(30 131 60)" fill="#466f3a"/>
<rect x="125.6" y="8" width="1.4" height="58" fill="#3a3226"/>
<path d="M117 65H136.6L135 81H118.6Z" fill="#ebe9e5"/>
<path d="M118 81H135" stroke="#2a2826" stroke-width="1"/>
<rect x="110" y="30" width="1.4" height="46" fill="#b9b9b7"/>
<path d="M52 68H71V90H67V74H56V90H52Z" fill="#bdbbb9"/>
<path d="M52 68H71V72H52Z" fill="#dedcda"/>
<path d="M53.4 60L56 58L59 60L62 62L61 69H54Z" fill="#7cc832"/>
<path d="M45 44C45 38 50 36 54 38C57 42 56 50 55 56L48 58Z" fill="#2a2624"/>
<path d="M50 42C53 41 55 44 54 49L51 50Z" fill="#d9b298"/>
<path d="M46 54L58 50L62 58L60 68L50 70Z" fill="#9a9896"/>
<path d="M-6 36C0 33 5 32 6 36L7 44L-6 46Z" fill="#262220"/>
<path d="M18 28C18 22 24 20 28 23C31 26 31 32 28 36L20 36Z" fill="#3b3430"/>
<path d="M2 44C8 38 18 36 24 36L34 38C42 42 48 52 52 64L46 68L34 58L6 56Z" fill="#8b8076"/>
<path d="M2 44L14 40L26 56L6 56Z" fill="#9c9288"/>
<path d="M-8 52C6 48 22 48 32 52C40 56 44 64 43 72C46 70 50 68 52 70C50 78 42 86 32 88L8 86L-8 80Z" fill="#b5502f"/>
<path d="M-8 54C8 50 22 52 28 58C32 66 30 78 26 86L8 86L-8 80Z" fill="#a34527"/>
<rect x="23" y="88" width="1.8" height="14" fill="#8a8886"/><path d="M8 100L24 98L46 100" stroke="#2a2826" stroke-width="1.6" fill="none"/>
<path d="M6 82L12 86L10 88L4 86Z" fill="#1e1c1b"/><path d="M28 86L38 90L36 96L26 94Z" fill="#1a1818"/>
<path d="M-6 70H4V78H-6Z" fill="#2a9a5a"/>
<path d="M80 34C80 30 86 29 89 32C91 36 90 42 87 44L82 42Z" fill="#3a2c26"/>
<path d="M83 35C86 34 88 36 88 40L85 43L82.6 40Z" fill="#d8a58c"/>
<path d="M78 48C80 43 92 42 97 46L100 62L94 64L78 62L72 60L76 54Z" fill="#e39c9a"/>
<path d="M66 57L76 54L78 58L68 61Z" fill="#d8a58c"/>
<path d="M94 52L107 50C109 56 106 66 100 72L84 74L82 70L94 62Z" fill="#b5502f"/>
<path d="M82 68H104L100 75H84Z" fill="#a34527"/>
<rect x="91" y="75" width="1.6" height="10" fill="#8a8886"/><path d="M80 86H104" stroke="#4a4846" stroke-width="1.4"/>
<path d="M70 62L90 61L92 68L82 70L84 84L78 84L76 72L70 70Z" fill="#262c3c"/>
<path d="M70 64L76 66L77 82L72 82Z" fill="#1e2432"/>
<path d="M76 84L86 83L88 87L78 89Z" fill="#ece8e4"/><path d="M70 82L77 82L77 86L70 85Z" fill="#dcd8d4"/></g></g></svg>
<svg class="a" style="left:860px;top:210.3px" width="125.7" height="106.3" viewBox="0 0 125.7 106.3"><defs><clipPath id="c10"><rect x="0" y="0" width="140" height="106.3" rx="2.5"/></clipPath><filter id="f10" x="-8%" y="-10%" width="116%" height="120%"><feGaussianBlur stdDeviation="0.8"/></filter></defs><g clip-path="url(#c10)"><g filter="url(#f10)"><rect x="-9" y="-9" width="152" height="127" fill="#0b4fc8"/><rect x="-9" y="100" width="152" height="18" fill="#0a3f9f"/><path d="M-8 -8H11V8L-8 12Z" fill="#050d22"/><path d="M-8 101L7 104V118H-8Z" fill="#050d22"/><ellipse cx="10" cy="56" rx="10" ry="30" fill="#2f7cf0" opacity=".7"/><ellipse cx="96" cy="52" rx="12" ry="28" fill="#1c62dc" opacity=".6"/><ellipse cx="60" cy="98" rx="40" ry="8" fill="#2f7cf0" opacity=".45"/><path d="M98.9 56.0L92.0 60.0L85.1 56.0L85.1 48.0L92.0 44.0L98.9 48.0Z" fill="none" stroke="#8db8f6" stroke-width="1.8" opacity="0.8"/><path d="M110.9 68.0L104.0 72.0L97.1 68.0L97.1 60.0L104.0 56.0L110.9 60.0Z" fill="none" stroke="#8db8f6" stroke-width="1.8" opacity="0.6"/><path d="M104.9 84.0L98.0 88.0L91.1 84.0L91.1 76.0L98.0 72.0L104.9 76.0Z" fill="none" stroke="#8db8f6" stroke-width="1.8" opacity="0.6"/><path d="M78.9 102.0L72.0 106.0L65.1 102.0L65.1 94.0L72.0 90.0L78.9 94.0Z" fill="none" stroke="#8db8f6" stroke-width="1.8" opacity="0.7"/><path d="M40.9 104.0L34.0 108.0L27.1 104.0L27.1 96.0L34.0 92.0L40.9 96.0Z" fill="none" stroke="#8db8f6" stroke-width="1.8" opacity="0.7"/><path d="M110.9 38.0L104.0 42.0L97.1 38.0L97.1 30.0L104.0 26.0L110.9 30.0Z" fill="none" stroke="#8db8f6" stroke-width="1.8" opacity="0.6"/><path d="M56.9 102.0L50.0 106.0L43.1 102.0L43.1 94.0L50.0 90.0L56.9 94.0Z" fill="none" stroke="#8db8f6" stroke-width="1.8" opacity="0.7"/><path d="M26.1 10.5L20.0 14.0L13.9 10.5L13.9 3.5L20.0 0.0L26.1 3.5Z" fill="#c9d3e2" opacity=".92"/><path d="M37.6 9.2L32.0 12.5L26.4 9.2L26.4 2.7L32.0 -0.5L37.6 2.7Z" fill="#eef2f8" opacity=".92"/><path d="M49.2 13.0L44.0 16.0L38.8 13.0L38.8 7.0L44.0 4.0L49.2 7.0Z" fill="#a9c4f0" opacity=".92"/><path d="M35.2 23.0L30.0 26.0L24.8 23.0L24.8 17.0L30.0 14.0L35.2 17.0Z" fill="#5a92e8" opacity=".92"/><path d="M70.8 11.8L66.0 14.5L61.2 11.8L61.2 6.2L66.0 3.5L70.8 6.2Z" fill="#dfe8f6" opacity=".92"/><path d="M60.3 5.5L56.0 8.0L51.7 5.5L51.7 0.5L56.0 -2.0L60.3 0.5Z" fill="#0a1a3a" opacity=".92"/><path d="M19.2 17.0L14.0 20.0L8.8 17.0L8.8 11.0L14.0 8.0L19.2 11.0Z" fill="#101216" opacity=".85"/><path d="M28.3 18.5L24.0 21.0L19.7 18.5L19.7 13.5L24.0 11.0L28.3 13.5Z" fill="#e9eef6" opacity=".85"/><path d="M40.8 20.8L36.0 23.5L31.2 20.8L31.2 15.2L36.0 12.5L40.8 15.2Z" fill="#101216" opacity=".85"/><path d="M52.3 16.5L48.0 19.0L43.7 16.5L43.7 11.5L48.0 9.0L52.3 11.5Z" fill="#dfe8f6" opacity=".85"/><path d="M62.3 14.5L58.0 17.0L53.7 14.5L53.7 9.5L58.0 7.0L62.3 9.5Z" fill="#101216" opacity=".85"/><path d="M123.2 21.0L118.0 24.0L112.8 21.0L112.8 15.0L118.0 12.0L123.2 15.0Z" fill="#101216" opacity=".85"/><path d="M115.5 28.0L112.0 30.0L108.5 28.0L108.5 24.0L112.0 22.0L115.5 24.0Z" fill="#dfe8f6" opacity=".85"/><path d="M29.0 41.2L20.0 46.4L11.0 41.2L11.0 30.8L20.0 25.6L29.0 30.8Z" fill="#15171c"/><path d="M28.1 40.7L20.0 45.4L11.9 40.7L11.9 31.3L20.0 26.6L28.1 31.3Z" fill="#cfd3da"/><path d="M20 26.6L28.1 31.3V40.7L20 45.4Z" fill="#f1f3f6"/><path d="M25.0 59.2L16.0 64.4L7.0 59.2L7.0 48.8L16.0 43.6L25.0 48.8Z" fill="#15171c"/><path d="M24.1 58.7L16.0 63.4L7.9 58.7L7.9 49.3L16.0 44.6L24.1 49.3Z" fill="#f4f6f9"/><path d="M16 44.6L24.1 49.3V58.7L16 63.4Z" fill="#b9bdc6"/><path d="M27.0 78.2L18.0 83.4L9.0 78.2L9.0 67.8L18.0 62.6L27.0 67.8Z" fill="#15171c"/><path d="M26.1 77.7L18.0 82.4L9.9 77.7L9.9 68.3L18.0 63.6L26.1 68.3Z" fill="#dfe3ea"/><path d="M18 63.6L26.1 68.3V77.7L18 82.4Z" fill="#f6f7fa"/><path d="M37.0 93.2L28.0 98.4L19.0 93.2L19.0 82.8L28.0 77.6L37.0 82.8Z" fill="#15171c"/><path d="M36.1 92.7L28.0 97.4L19.9 92.7L19.9 83.3L28.0 78.6L36.1 83.3Z" fill="#e9eef6"/><path d="M28 78.6L36.1 83.3V92.7L28 97.4Z" fill="#a9bbd8"/><path d="M30 28L52 20L78 26L86 44L82 66L70 82L54 94L38 90L28 70Z" fill="#14161b"/><path d="M44.2 37.1L37.0 41.3L29.8 37.1L29.8 28.8L37.0 24.7L44.2 28.8Z" fill="#f6f8fb"/><path d="M41.3 35.5L37.0 38.0L32.7 35.5L32.7 30.5L37.0 28.0L41.3 30.5Z" fill="#14161b"/><path d="M39.8 34.6L37.0 36.2L34.2 34.6L34.2 31.4L37.0 29.8L39.8 31.4Z" fill="#7c8088"/><path d="M61.2 34.1L54.0 38.3L46.8 34.1L46.8 25.8L54.0 21.7L61.2 25.8Z" fill="#f6f8fb"/><path d="M58.3 32.5L54.0 35.0L49.7 32.5L49.7 27.5L54.0 25.0L58.3 27.5Z" fill="#14161b"/><path d="M56.8 31.6L54.0 33.2L51.2 31.6L51.2 28.4L54.0 26.8L56.8 28.4Z" fill="#2160d6"/><path d="M78.2 38.1L71.0 42.3L63.8 38.1L63.8 29.8L71.0 25.7L78.2 29.8Z" fill="#f6f8fb"/><path d="M75.3 36.5L71.0 39.0L66.7 36.5L66.7 31.5L71.0 29.0L75.3 31.5Z" fill="#14161b"/><path d="M73.8 35.6L71.0 37.2L68.2 35.6L68.2 32.4L71.0 30.8L73.8 32.4Z" fill="#33363c"/><path d="M41.2 56.1L34.0 60.3L26.8 56.1L26.8 47.9L34.0 43.7L41.2 47.8Z" fill="#f6f8fb"/><path d="M38.3 54.5L34.0 57.0L29.7 54.5L29.7 49.5L34.0 47.0L38.3 49.5Z" fill="#14161b"/><path d="M36.8 53.6L34.0 55.2L31.2 53.6L31.2 50.4L34.0 48.8L36.8 50.4Z" fill="#15171c"/><path d="M55.2 54.1L48.0 58.3L40.8 54.1L40.8 45.9L48.0 41.7L55.2 45.8Z" fill="#f6f8fb"/><path d="M52.3 52.5L48.0 55.0L43.7 52.5L43.7 47.5L48.0 45.0L52.3 47.5Z" fill="#14161b"/><path d="M50.8 51.6L48.0 53.2L45.2 51.6L45.2 48.4L48.0 46.8L50.8 48.4Z" fill="#2160d6"/><path d="M71.2 54.1L64.0 58.3L56.8 54.1L56.8 45.9L64.0 41.7L71.2 45.8Z" fill="#f6f8fb"/><path d="M68.3 52.5L64.0 55.0L59.7 52.5L59.7 47.5L64.0 45.0L68.3 47.5Z" fill="#14161b"/><path d="M66.8 51.6L64.0 53.2L61.2 51.6L61.2 48.4L64.0 46.8L66.8 48.4Z" fill="#e4c622"/><path d="M86.2 50.1L79.0 54.3L71.8 50.1L71.8 41.9L79.0 37.7L86.2 41.8Z" fill="#f6f8fb"/><path d="M83.3 48.5L79.0 51.0L74.7 48.5L74.7 43.5L79.0 41.0L83.3 43.5Z" fill="#14161b"/><path d="M81.8 47.6L79.0 49.2L76.2 47.6L76.2 44.4L79.0 42.8L81.8 44.4Z" fill="#3a3d44"/><path d="M45.2 73.2L38.0 77.3L30.8 73.2L30.8 64.8L38.0 60.7L45.2 64.8Z" fill="#f6f8fb"/><path d="M42.3 71.5L38.0 74.0L33.7 71.5L33.7 66.5L38.0 64.0L42.3 66.5Z" fill="#14161b"/><path d="M40.8 70.6L38.0 72.2L35.2 70.6L35.2 67.4L38.0 65.8L40.8 67.4Z" fill="#34373e"/><path d="M62.2 72.2L55.0 76.3L47.8 72.2L47.8 63.9L55.0 59.7L62.2 63.8Z" fill="#f6f8fb"/><path d="M59.3 70.5L55.0 73.0L50.7 70.5L50.7 65.5L55.0 63.0L59.3 65.5Z" fill="#14161b"/><path d="M57.8 69.6L55.0 71.2L52.2 69.6L52.2 66.4L55.0 64.8L57.8 66.4Z" fill="#2160d6"/><path d="M79.2 70.2L72.0 74.3L64.8 70.2L64.8 61.9L72.0 57.7L79.2 61.8Z" fill="#f6f8fb"/><path d="M76.3 68.5L72.0 71.0L67.7 68.5L67.7 63.5L72.0 61.0L76.3 63.5Z" fill="#14161b"/><path d="M74.8 67.6L72.0 69.2L69.2 67.6L69.2 64.4L72.0 62.8L74.8 64.4Z" fill="#e4c622"/><path d="M52.2 89.2L45.0 93.3L37.8 89.2L37.8 80.8L45.0 76.7L52.2 80.8Z" fill="#f6f8fb"/><path d="M49.3 87.5L45.0 90.0L40.7 87.5L40.7 82.5L45.0 80.0L49.3 82.5Z" fill="#14161b"/><path d="M47.8 86.6L45.0 88.2L42.2 86.6L42.2 83.4L45.0 81.8L47.8 83.4Z" fill="#2160d6"/><path d="M69.2 88.2L62.0 92.3L54.8 88.2L54.8 79.8L62.0 75.7L69.2 79.8Z" fill="#f6f8fb"/><path d="M66.3 86.5L62.0 89.0L57.7 86.5L57.7 81.5L62.0 79.0L66.3 81.5Z" fill="#14161b"/><path d="M64.8 85.6L62.0 87.2L59.2 85.6L59.2 82.4L62.0 80.8L64.8 82.4Z" fill="#33363c"/><path d="M49.6 101.2L44.0 104.5L38.4 101.2L38.4 94.8L44.0 91.5L49.6 94.8Z" fill="#dfe8f6" opacity=".8"/><path d="M65.6 103.2L60.0 106.5L54.4 103.2L54.4 96.8L60.0 93.5L65.6 96.8Z" fill="#c9d9f2" opacity=".8"/><path d="M81.6 93.2L76.0 96.5L70.4 93.2L70.4 86.8L76.0 83.5L81.6 86.8Z" fill="#e9eef6" opacity=".8"/><path d="M72 -1H112V9L98 20L80 14Z" fill="#101216" opacity=".75"/><rect x="77" y="1" width="9" height="4.4" fill="#ecd022" transform="rotate(22 77 1)"/><rect x="88" y="5" width="11" height="4.4" fill="#ecd022" transform="rotate(22 88 5)"/><rect x="84" y="11" width="8" height="3.6" fill="#ecd022" transform="rotate(22 84 11)"/><rect x="97" y="9" width="7" height="5" fill="#ecd022" transform="rotate(22 97 9)"/><rect x="93" y="0" width="8" height="3.4" fill="#ecd022" transform="rotate(22 93 0)"/><rect x="104" y="3" width="6" height="4" fill="#ecd022" transform="rotate(22 104 3)"/><path d="M78.8 10.8L74.0 13.6L69.2 10.8L69.2 5.2L74.0 2.4L78.8 5.2Z" fill="none" stroke="#eef2f8" stroke-width="2"/><path d="M110.8 14.8L106.0 17.6L101.2 14.8L101.2 9.2L106.0 6.4L110.8 9.2Z" fill="none" stroke="#eef2f8" stroke-width="2"/><path d="M94.8 18.8L90.0 21.6L85.2 18.8L85.2 13.2L90.0 10.4L94.8 13.2Z" fill="none" stroke="#eef2f8" stroke-width="2"/><path d="M112 0H126V10L118 14Z" fill="#dfe7f3" opacity=".85"/><path d="M110 -1H126V4H110Z" fill="#101216" opacity=".7"/><path d="M112 34L126 28V98L114 94L107 72L112 52Z" fill="#101216" opacity=".88"/><path d="M124.4 45.1L119.0 48.2L113.6 45.1L113.6 38.9L119.0 35.8L124.4 38.9Z" fill="#e4e7ec" opacity=".9"/><path d="M126.4 63.1L121.0 66.2L115.6 63.1L115.6 56.9L121.0 53.8L126.4 56.9Z" fill="#b9bdc6" opacity=".9"/><path d="M123.4 82.1L118.0 85.2L112.6 82.1L112.6 75.9L118.0 72.8L123.4 75.9Z" fill="#3a3d44" opacity=".9"/><path d="M127.4 97.1L122.0 100.2L116.6 97.1L116.6 90.9L122.0 87.8L127.4 90.9Z" fill="#d9c93a" opacity=".9"/><path d="M106 44L114 50L122 44M106 62L114 56L122 62" stroke="#f3f5f9" stroke-width="2.4" fill="none"/><path d="M84 56L90 52L96 56L96 62L90 66L84 62Z" fill="none" stroke="#cfe0fa" stroke-width="1.6" opacity=".8"/><rect x="80" y="68" width="8" height="6" fill="#e6c722"/><rect x="82" y="78" width="6" height="8" fill="#e6c722" opacity=".85"/><rect x="104" y="88" width="7" height="8" fill="#e6c722" opacity=".6"/></g></g></svg>
</body></html>
